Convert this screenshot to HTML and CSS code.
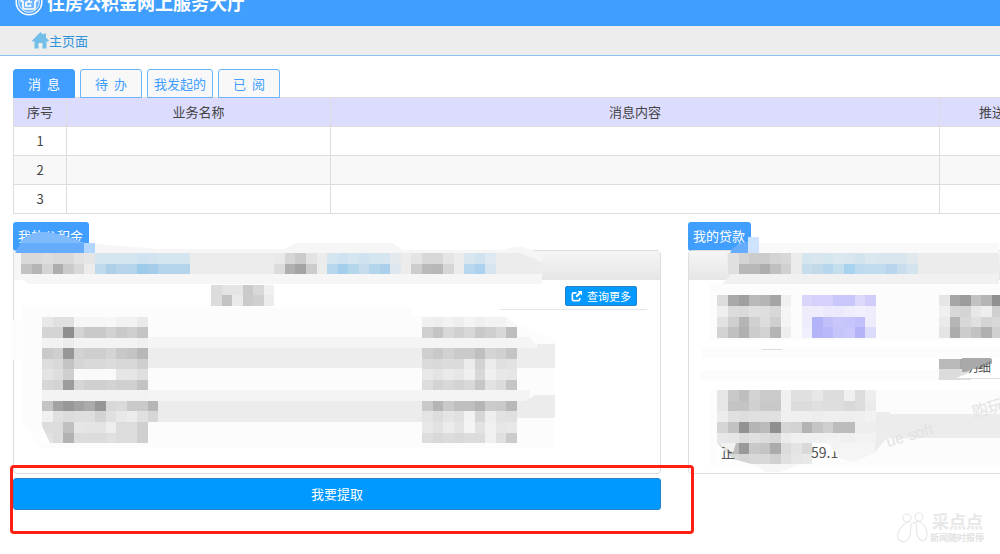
FILE: index.html
```html
<!DOCTYPE html>
<html lang="zh-CN">
<head>
<meta charset="utf-8">
<title>住房公积金网上服务大厅</title>
<link rel="stylesheet" href="styles.css">
</head>
<body>
<header class="site-header">
  <svg class="brand-logo" viewBox="0 0 28 28" fill="none" stroke="#fff" aria-hidden="true">
    <circle cx="14" cy="14" r="12.8" stroke-width="1.5"/>
    <circle cx="14" cy="14" r="10.4" fill="#fff" fill-opacity=".25" stroke-width=".8"/>
    <path d="M5.500 13.500 14 6l8.500 7.500M8 13v6q0 2 2 2h8q2 0 2-2v-6M14 10v4M11 14h6M11 14v4h4.500v-1.500" stroke-width="1.700"/>
  </svg>
  <h1 class="site-title">住房公积金网上服务大厅</h1>
</header>
<nav class="crumbs">
  <a class="crumb" href="#">
    <svg class="home-icon" viewBox="0 0 17 17" aria-hidden="true"><path d="M8.500 0 11.500 3V1.500h2.500v4L17 8.700l-1.200 1.300L14.500 9v7.500H10.500V11h-4v5.500H2.500V9L1.200 10 0 8.700z" fill="#74bfe9"/></svg>主页面</a>
</nav>
<main class="content">
  <div class="tabs">
    <button class="tab tab-active">消&nbsp; 息</button>
    <button class="tab">待&nbsp; 办</button>
    <button class="tab tab-wide">我发起的</button>
    <button class="tab">已&nbsp; 阅</button>
  </div>
  <div class="table-wrap">
    <table class="messages">
      <colgroup><col class="c-no"><col class="c-name"><col class="c-text"><col class="c-time"></colgroup>
      <thead><tr><th>序号</th><th>业务名称</th><th>消息内容</th><th>推送时间</th></tr></thead>
      <tbody>
        <tr><td>1</td><td></td><td></td><td></td></tr>
        <tr><td>2</td><td></td><td></td><td></td></tr>
        <tr><td>3</td><td></td><td></td><td></td></tr>
      </tbody>
    </table>
  </div>
  <div class="columns">
    <section class="fund">
      <h2 class="label">我的公积金</h2>
      <div class="panel">
        <div class="panel-head"></div>
        <div class="panel-tools">
          <button class="more"><svg class="more-icon" viewBox="0 0 12 12" aria-hidden="true"><path d="M6 2H3Q1.500 2 1.500 3.500V9Q1.500 10.500 3 10.500H8Q9.500 10.500 9.500 9V7.500" fill="none" stroke="#fff" stroke-width="1.8"/><path d="M7 0h5v5l-1.700-1.700L6.500 7.200 4.800 5.500l3.900-3.800z" fill="#fff"/></svg>查询更多</button>
        </div>
      </div>
      <div class="action">
        <button class="withdraw">我要提取</button>
        <div class="highlight"></div>
      </div>
    </section>
    <section class="loan">
      <h2 class="label">我的贷款</h2>
      <div class="panel">
        <div class="panel-head"></div>
      </div>
    </section>
  </div>
</main>
<svg class="redaction" width="1000" height="554" aria-hidden="true">
  <path d="M15 253 21 243Q26 233 42 232 58 232 84 243V253z" fill="#65adfc"/>
  <path d="M21 243Q26 233 42 232 58 232 84 243z" fill="#7fbafc"/>
  <path d="M84 243h11v10H84z" fill="#b2d6fd"/>
  <path d="M95 244 160 249H285L295 243H392L403 250H500L515 247H522L535 251 542 253V284H28L24 280H14V253H95z" fill="#f6f6f6"/>
  <path d="M22 253H520L542 262V274H22z" fill="#ececec"/>
  <path d="M20 300H500V313H20z" fill="#fff"/>
  <path d="M22 307H412V316H505L555 340V448H40L22 420z" fill="#fcfcfc"/>
  <path d="M12 320h9v40h-9z" fill="#fcfcfc"/>
  <path d="M148 337H530L537 348H148z" fill="#f5f5f5"/>
  <path d="M148 348H537V344H555V368H148z" fill="#ededed"/>
  <path d="M148 390H530V401H148z" fill="#f4f4f4"/>
  <path d="M148 401H525L535 395H555V418H516L508 422H148z" fill="#ececec"/>
  <path d="M730 253 740 243H999V253z" fill="#f9f9f9"/>
  <path d="M727 253H999V274H727z" fill="#ececec"/>
  <path d="M722 284 732 274H999V284z" fill="#f1f1f1"/>
  <path d="M730 253Q734 243 748 242V253z" fill="#65adfc"/>
  <path d="M748 237h11v16H748z" fill="#cde3fe"/>
  <path d="M710 284H1000V340H710zM702 348H1000V358H702zM700 370H940V380H700zM710 390H1000V467H710z" fill="#fcfcfc"/>
  <path d="M762 349.500H782" stroke="#ddd"/>
  <path d="M875 412H890V414H1000V438H887L875 452z" fill="#ececec"/>
  <path d="M875 390h10v22h-10z" fill="#fbfbfb"/>
  <path d="M839 440H875V453L853 462 839 458z" fill="#f5f5f5"/>
  <text x="888" y="447" class="stamp" transform="rotate(-16 888 447)">ue soft</text>
  <text x="974" y="418" class="stamp" transform="rotate(-16 974 418)">购玩</text>
  <g id="mosaic" shape-rendering="crispEdges"></g>
  <path d="M41 424 50 443H41zM505 316h15v11z" fill="#fff"/>
  <path d="M716 442 733 459 755 465H716z" fill="#fdfdfd"/>
  <path d="M755 464H800L780 472H765z" fill="#f6f6f6"/>
  <text x="721" y="458" class="peek">正</text>
  <path d="M720 443H736L733 453 729 450 722 446z" fill="#f1f1f1"/>
  <text x="811" y="458" class="peek">59.1</text>
  <path d="M826 438H841V455H838L833 450z" fill="#f3f3f3"/>
  <path d="M954 379 1000 360V379z" fill="#fff"/>
  <text x="965" y="371" class="peek peek-small">明细</text>
  <path d="M962 358H991V361L966 372H962z" fill="#a9a9a9"/>
  <path d="M938 378.500H1000" stroke="#ddd"/>
  <g fill="none" stroke="#e8e8e8" stroke-width="1.200">
    <circle cx="907" cy="518" r="4"/><circle cx="919" cy="517" r="4"/>
    <path d="M911 521C901 523 895 535 899 540Q906 545 910 536L911 524 916 522 917 535Q921 544 926 539C929 530 924 522 916 521"/>
  </g>
  <text x="932" y="528" class="source-name">采点点</text>
  <text x="930" y="541" class="source-tag">新闻随时报停</text>
</svg>
<script src="mosaic.js"></script>
</body>
</html>
```
FILE: styles.css
```css
* { box-sizing: border-box; }
body {
  margin: 0;
  position: relative;
  min-height: 100vh;
  overflow: hidden;
  background: #fff;
  color: #444;
  font: 13px/20px "Noto Sans CJK SC", sans-serif;
}
button { font: inherit; margin: 0; cursor: pointer; }
.site-header {
  display: flex;
  align-items: center;
  gap: 4px;
  height: 48px;
  margin-top: -22px;
  padding-left: 15px;
  background: #409eff;
  color: #fff;
}
.brand-logo { width: 28px; height: 28px; }
.site-title { margin: 0; font-size: 18px; line-height: 24px; font-weight: 700; }
.crumbs {
  display: flex;
  align-items: center;
  height: 30px;
  padding-left: 32px;
  background: #ededed;
  border-bottom: 1px solid #8cc1ee;
}
.crumb { display: flex; align-items: center; color: #2f93dc; text-decoration: none; }
.home-icon { width: 17px; height: 17px; }
.content { padding: 13px 0 0 13px; }
.tabs { display: flex; gap: 5px; }
.tab {
  width: 62px;
  height: 29px;
  padding: 0;
  border: 1px solid #6cb4fb;
  border-radius: 3px 3px 0 0;
  background: #f8f8f8;
  color: #409eff;
}
.tab-active { background: #409eff; border-color: #409eff; color: #fff; }
.tab-wide { width: 66px; }
.table-wrap { overflow: hidden; margin-top: -1px; }
.messages {
  table-layout: fixed;
  width: 1058px;
  border-collapse: collapse;
  text-align: center;
}
.c-no { width: 53px; }
.c-name { width: 264px; }
.c-text { width: 609px; }
.messages th, .messages td {
  height: 29px;
  padding: 0 0 1px;
  border: 1px solid #ddd;
  font-weight: 400;
}
.messages th { background: #dcdcff; }
.messages tbody tr:nth-child(even) { background: #f8f8f8; }
.columns {
  display: grid;
  grid-template-columns: 27fr 13fr;
  gap: 27px;
  margin-top: 8px;
}
.loan { overflow: hidden; }
.loan .panel { margin-right: -60px; }
.label {
  width: max-content;
  margin: 0;
  padding: 4px 6px 5px 5px;
  border-radius: 3px;
  background: #409eff;
  color: #fff;
  font-size: 13px;
  line-height: 20px;
  font-weight: 400;
}
.panel {
  min-height: 224px;
  margin-top: -1px;
  border: 1px solid #ddd;
  border-radius: 4px;
}
.panel-head { height: 29px; background: linear-gradient(#f5f5f5, #e6e6e6); }
.panel-tools {
  display: flex;
  justify-content: flex-end;
  margin: 0 13px;
  padding: 6px 10px 3px 0;
  border-bottom: 1px solid #e5e5e5;
}
.more {
  display: flex;
  align-items: center;
  gap: 5px;
  height: 20px;
  padding: 0 5px;
  border: 1px solid #2383cc;
  border-radius: 2px;
  background: #0099ff;
  color: #fff;
  font-size: 11px;
}
.more-icon { width: 11px; height: 11px; }
.action { position: relative; margin-top: 4px; }
.withdraw {
  display: block;
  width: 100%;
  height: 32px;
  padding: 0 0 1px;
  border: 1px solid #2383cc;
  border-radius: 3px;
  background: #0099ff;
  color: #fff;
}
.highlight {
  position: absolute;
  inset: -13px -33px -24px -3px;
  border: 3px solid #ff2015;
  border-radius: 4px;
  pointer-events: none;
}
.redaction { position: absolute; top: 0; left: 0; pointer-events: none; }
.peek { font: 14px "Noto Sans CJK SC", sans-serif; fill: #555; }
.peek-small { font-size: 13px; }
.stamp { font: 16px "Liberation Sans", sans-serif; fill: #e2e2e2; }
.source-name { font: 700 17px "Noto Sans CJK SC", sans-serif; fill: #e8e8e8; }
.source-tag { font: 700 9px "Noto Sans CJK SC", sans-serif; fill: #e2e2e2; }
```
FILE: mosaic.js
```javascript
// Each entry: first column, row, then colours (two digits = grey, six = RGB, "-" = empty).
const CELL = 10.55;
const runs = [
  [2, 24, "d9 d9 dd d9 d9 e2 e6"],
  [2, 25, "c2 b5 d4 ad ca d8 -"],
  [9, 24, "d6e6f1 d6e6f1 d6e6f1 d6e6f1 d0e3f0 d3e4f0 d6e6f1 d6e6f1 d6e6f1"],
  [9, 25, "bedaec aecfe8 b7d5ea b3d4ea 9fcbea a5cdea b3d4ea b3d4ea b3d4ea"],
  [26, 24, "e9 d6 cb e3"],
  [26, 25, "dc b0 a4 cc"],
  [31, 24, "d6e6f1 cfe2f0 d6e6f1 cfe2f0 d6e6f1 d6e6f1 e4e9ee"],
  [31, 25, "b7d7ec a4cfec b5d7ec c5dcec b3d5ec acd0eb dfe7ee"],
  [39, 24, "e4 d8 d8 e5"],
  [39, 25, "cd ba b8 d6"],
  [44, 24, "d8e6f0 d0e2f0 dde8f0"],
  [44, 25, "b8d8ef add2ef d5e4ef"],
  [20, 27, "dc e4 e5 ca d8 f0"],
  [20, 28, "dc c3 ea ca cf ec"],
  [4, 30, "e8 e0 e0 f6 f6 f6 f7 f2 f2 ea"],
  [4, 31, "d4 d4 8e d4 c9 c9 d2 c9 cf c4"],
  [4, 32, "f2 f2 ec f3 f3 f3 f3 f3 f3 f0"],
  [4, 33, "c9 cf 97 d2 ce ce d4 c8 c4 b7"],
  [4, 34, "dd d9 c4 d6 d9 d9 dc d8 d8 cf"],
  [4, 35, "e4 de cf fa fa fa fa e6 e6 df"],
  [4, 36, "d6 d3 9c d6 d0 d0 d3 cf d0 c3"],
  [4, 37, "f3 f3 f3 f3 f3 f3 f3 f3 f3 f3"],
  [4, 38, "c4 a3 98 a2 ab 96 d8 da c9 c9 b6"],
  [4, 39, "f0 e0 dc de de d3 e0 e8 ec e0 d6"],
  [4, 40, "dc dc c0 e6 e4 e4 ee dc dc cf"],
  [4, 41, "e2 dc b2 dc dc dc e0 dc dc cf"],
  [40, 30, "f0 ee f2 ee f4 f0 f3 f3 f8"],
  [40, 31, "d0 c4 d8 d0 d8 c9 cf d8 be"],
  [40, 32, "f4 f4 f4 f4 f4 f4 f4 f4 f4"],
  [40, 33, "cf c8 d2 ca ca bf d4 d0 c4"],
  [40, 34, "db d9 dc db ec d2 ec e0 e2"],
  [40, 35, "e8 e4 ea e6 f0 d8 f0 e8 e6"],
  [40, 36, "dd d3 d8 d3 d8 c6 e2 dc c5"],
  [40, 37, "f4 f4 f4 f4 f4 f4 f4 f4 f4"],
  [40, 38, "c9 b5 c9 bf bf b5 cb c9 b8"],
  [40, 39, "e4 dd e4 e0 f2 d6 ee e2 e0"],
  [40, 40, "e8 e2 ec e4 f4 e2 f0 e6 e8"],
  [40, 41, "dd d8 dc d9 dc dc f0 e0 cb"],
  [69, 24, "e0 d4 cc cc d4 d8"],
  [69, 25, "e0 b8 b8 ad c0 d0"],
  [76, 24, "d6e6ee d9e6ee d6e6ee dde8ee d9e6ee d4e4ee dde8ee d9e6ee d9e6ee d9e6ee e2e9ee"],
  [76, 25, "c6deec c2d9ea b6d6ed c5deec a8d3ef bddbee c0dcee c0dcee b7d6ee c8deec d3e4ee"],
  [68, 28, "dc a9 9f b9 b5 a5 f0 - d9d5fb d5d1fa d5d1fa c9c6fb c9c6fb dcdafb d0cdfb"],
  [68, 29, "ef dc da e0 de d8 f5 - efecfc efecfc ece9fc ece9fc efecfc f2f0fd efecfc"],
  [68, 30, "e2 cf b5 d0 dc cf f4 - ececfd b3b3f9 c2c0fa c8c6fb c6c5fb c2c0fa ededfd"],
  [68, 31, "d2 c0 b0 cc d2 b4 ee - efeffd b3b3f9 b9b8fa c5c4fb c9c7fb b3b3f9 dcdcfc"],
  [89, 28, "e6 a6 9c c2 b5 90"],
  [89, 29, "f0 d8 d4 e8 ee d0"],
  [89, 30, "ea b5 d8 e0 d4 d8"],
  [89, 31, "e4 ac cc c2 b0 d0"],
  [89, 34, "b9 b9 a5 ab a9"],
  [89, 35, "dc dc e0 - -"],
  [68, 37, "e6 c9 be d2 cb cb f0 e0 e0 e8 dd dc f0 dc ee"],
  [68, 38, "e6 c4 c4 d0 c8 c8 f0 dc dc e0 de de d8 dc eb"],
  [68, 39, "ec e0 dd e0 e0 e0 f0 ef ef ed ef ef ee ef f2"],
  [68, 40, "d5 c2 92 b5 bb 8f d5 d2 b3 c4 cf bc bc ee ee"],
  [68, 41, "e8 e6 dc e0 dc d8 ec f0 f0 f0 f0 f0 f0 f2 f2"],
  [68, 42, "e0 bc 99 c9 c4 ab dc e4 d9"],
  [68, 43, "- d8 d4 d8 d8 d0 e0 e6 e9"]
];
const layer = document.getElementById("mosaic");
for (const [col, row, colours] of runs) {
  colours.split(" ").forEach((c, i) => {
    if (c === "-") return;
    const x0 = Math.round((col + i) * CELL);
    const y0 = Math.round(row * CELL);
    const cell = document.createElementNS("http://www.w3.org/2000/svg", "rect");
    cell.setAttribute("x", x0);
    cell.setAttribute("y", y0);
    cell.setAttribute("width", Math.round((col + i + 1) * CELL) - x0);
    cell.setAttribute("height", Math.round((row + 1) * CELL) - y0);
    cell.setAttribute("fill", "#" + (c.length === 2 ? c + c + c : c));
    layer.appendChild(cell);
  });
}
```
